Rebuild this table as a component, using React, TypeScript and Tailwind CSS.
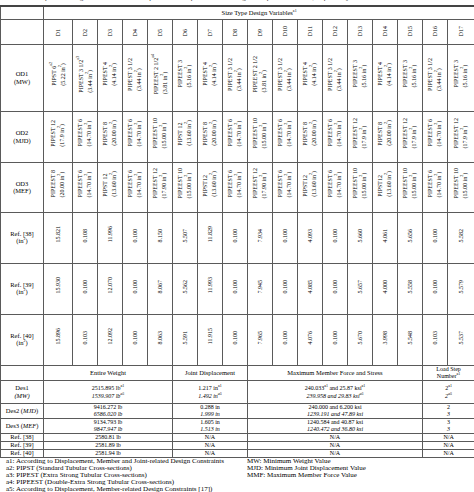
import React from "react"

type Pipe = [string, string, string]

const od1: Pipe[] = [
  ["PIPST 6", "a2", "5.22"], ["PIPEST 3 1/2", "a3", "3.44"], ["PIPEST 4", "", "4.14"], ["PIPEST 3 1/2", "", "3.44"],
  ["PIPEEST 2 1/2", "a4", "3.81"], ["PIPEEST 3", "", "5.16"], ["PIPEST 4", "", "4.14"], ["PIPEST 3 1/2", "", "3.44"],
  ["PIPEEST 2 1/2", "", "3.81"], ["PIPEST 3 1/2", "", "3.44"], ["PIPEST 4", "", "4.14"], ["PIPEST 3 1/2", "", "3.44"],
  ["PIPEEST 3", "", "5.16"], ["PIPEST 4", "", "4.14"], ["PIPEEST 3", "", "5.16"], ["PIPEST 3 1/2", "", "3.44"],
  ["PIPEEST 3", "", "5.16"],
]

const od2: Pipe[] = [
  ["PIPEST 12", "", "17.9"], ["PIPEEST 6", "", "14.70"], ["PIPEST 8", "", "20.00"], ["PIPEEST 6", "", "14.70"],
  ["PIPEEST 10", "", "15.00"], ["PIPST 12", "", "13.60"], ["PIPEST 8", "", "20.00"], ["PIPEEST 6", "", "14.70"],
  ["PIPEEST 10", "", "15.00"], ["PIPEEST 6", "", "14.70"], ["PIPEST 8", "", "20.00"], ["PIPEEST 6", "", "14.70"],
  ["PIPEEST 12", "", "17.9"], ["PIPEST 8", "", "20.00"], ["PIPEEST 12", "", "17.9"], ["PIPEEST 6", "", "14.70"],
  ["PIPEEST 12", "", "17.9"],
]

const od3: Pipe[] = [
  ["PIPEEST 8", "", "20.00"], ["PIPEEST 6", "", "14.70"], ["PIPST 12", "", "13.60"], ["PIPEEST 6", "", "14.70"],
  ["PIPEEST 12", "", "17.90"], ["PIPEEST 10", "", "15.00"], ["PIPST12", "", "13.60"], ["PIPEEST 6", "", "14.70"],
  ["PIPEEST 12", "", "17.90"], ["PIPEEST 6", "", "14.70"], ["PIPST12", "", "13.60"], ["PIPEEST 6", "", "14.70"],
  ["PIPEEST 10", "", "15.00"], ["PIPST12", "", "13.60"], ["PIPEEST 10", "", "15.00"], ["PIPEEST 6", "", "14.70"],
  ["PIPEEST 10", "", "15.00"],
]

const refs: [string, string[]][] = [
  ["38", ["15.821", "0.108", "11.996", "0.100", "8.150", "5.507", "11.829", "0.100", "7.934", "0.100", "4.093", "0.100", "5.660", "4.061", "5.656", "0.100", "5.582"]],
  ["39", ["15.930", "0.100", "12.070", "0.100", "8.067", "5.562", "11.993", "0.100", "7.945", "0.100", "4.085", "0.100", "5.657", "4.000", "5.558", "0.100", "5.579"]],
  ["40", ["15.896", "0.103", "12.092", "0.100", "8.063", "5.591", "11.915", "0.100", "7.965", "0.100", "4.076", "0.100", "5.670", "3.998", "5.548", "0.103", "5.537"]],
]

const cell = "border border-[#5a5a5a] p-0 text-center align-middle"
const sup = "static align-super text-[4px] leading-none"

function PipeCell({ p }: { p: Pipe }) {
  return (
    <td className={cell}>
      <div className="inline-block rotate-180 whitespace-nowrap text-left text-[6px] leading-[7px] [writing-mode:vertical-rl]">
        {p[0]}
        {p[1] && <sup className={sup}>{p[1]}</sup>}
        <br />({p[2]} in<sup className={sup}>2</sup>)
      </div>
    </td>
  )
}

function Label({ a, b }: { a: string; b: React.ReactNode }) {
  return (
    <td className={cell + " text-[6.5px] leading-[7.5px]"}>
      {a}
      <br />
      {b}
    </td>
  )
}

export default function App() {
  return (
    <div className="w-[474px] bg-white text-black font-['Liberation_Serif',serif]">
      {/* caption, cut off at top */}
      <div className="h-[5px] overflow-hidden">
        <p className="-mt-[7px] whitespace-nowrap pl-[40px] text-[7px] leading-[10px] text-[#333]">
          Optimum design results of the 72-bar space truss compared with results given in previous studies, respectively.
        </p>
      </div>

      <table className="w-[474px] table-fixed border-collapse">
        <colgroup>
          <col className="w-[43px]" />
          <col className="w-[29px]" />
          {Array.from({ length: 15 }).map((_, i) => (
            <col key={i} className="w-[25px]" />
          ))}
          <col className="w-[27px]" />
        </colgroup>
        <tbody>
          <tr className="h-[13px]">
            <td className={cell + " border-t-2 border-t-[#444]"} />
            <td colSpan={17} className={cell + " border-t-2 border-t-[#444] text-[6.5px] leading-none"}>
              Size Type Design Variables<sup className={sup}>a1</sup>
            </td>
          </tr>
          <tr className="h-[25px]">
            <td className={cell} />
            {Array.from({ length: 17 }).map((_, i) => (
              <td key={i} className={cell}>
                <div className="inline-block rotate-180 whitespace-nowrap text-[6px] leading-[7px] [writing-mode:vertical-rl]">
                  D{i + 1}
                </div>
              </td>
            ))}
          </tr>
          <tr className="h-[67px]">
            <Label a="OD1" b="(MW)" />
            {od1.map((p, i) => <PipeCell key={i} p={p} />)}
          </tr>
          <tr className="h-[51px]">
            <Label a="OD2" b="(MJD)" />
            {od2.map((p, i) => <PipeCell key={i} p={p} />)}
          </tr>
          <tr className="h-[50px]">
            <Label a="OD3" b="(MEF)" />
            {od3.map((p, i) => <PipeCell key={i} p={p} />)}
          </tr>
          {refs.map(([r, vals]) => (
            <tr key={r} className="h-[51px]">
              <Label a={`Ref. [${r}]`} b={<>(in<sup className={sup}>2</sup>)</>} />
              {vals.map((v, i) => (
                <td key={i} className={cell}>
                  <div className="inline-block rotate-180 whitespace-nowrap text-[6px] leading-[7px] [writing-mode:vertical-rl]">
                    {v}
                  </div>
                </td>
              ))}
            </tr>
          ))}

          {/* results block */}
          <tr className="h-[15px] text-[6.5px] leading-[7px]">
            <td className={cell} />
            <td colSpan={5} className={cell}>Entire Weight</td>
            <td colSpan={3} className={cell}>Joint Displacement</td>
            <td colSpan={7} className={cell}>Maximum Member Force and Stress</td>
            <td colSpan={2} className={cell + " text-[6px] leading-[6.5px]"}>
              Load Step
              <br />
              Number<sup className={sup}>a1</sup>
            </td>
          </tr>
          <tr className="h-[23px] text-[6px] leading-[7px]">
            <td className={cell + " text-[6.5px] leading-[7.5px]"}>
              Des1
              <br />
              <i>(MW)</i>
            </td>
            <td colSpan={5} className={cell}>
              2515.895 lb<sup className={sup}>a1</sup>
              <br />
              <i>1539.907 lb<sup className={sup}>a5</sup></i>
            </td>
            <td colSpan={3} className={cell}>
              1.217 in<sup className={sup}>a1</sup>
              <br />
              <i>1.492 in<sup className={sup}>a5</sup></i>
            </td>
            <td colSpan={7} className={cell}>
              240.033<sup className={sup}>a1</sup> and 25.87 ksi<sup className={sup}>a1</sup>
              <br />
              <i>239.958 and 29.83 ksi<sup className={sup}>a5</sup></i>
            </td>
            <td colSpan={2} className={cell}>
              2<sup className={sup}>a1</sup>
              <br />
              <i>2<sup className={sup}>a5</sup></i>
            </td>
          </tr>
          <tr className="h-[15px] text-[6px] leading-[7px]">
            <td className={cell + " text-[6.5px]"}>
              Des2 (<i>MJD</i>)
            </td>
            <td colSpan={5} className={cell}>
              9416.272 lb
              <br />
              <i>6586.020 lb</i>
            </td>
            <td colSpan={3} className={cell}>
              0.288 in
              <br />
              <i>1.999 in</i>
            </td>
            <td colSpan={7} className={cell}>
              240.000 and 6.200 ksi
              <br />
              <i>1239.191 and 47.89 ksi</i>
            </td>
            <td colSpan={2} className={cell}>
              2
              <br />
              <i>3</i>
            </td>
          </tr>
          <tr className="h-[14px] text-[6px] leading-[7px]">
            <td className={cell + " text-[6.5px]"}>
              Des3 (<i>MEF</i>)
            </td>
            <td colSpan={5} className={cell}>
              9134.793 lb
              <br />
              <i>9847.947 lb</i>
            </td>
            <td colSpan={3} className={cell}>
              1.605 in
              <br />
              <i>1.513 in</i>
            </td>
            <td colSpan={7} className={cell}>
              1240.584 and 40.87 ksi
              <br />
              <i>1240.472 and 36.80 ksi</i>
            </td>
            <td colSpan={2} className={cell}>
              3
              <br />
              <i>3</i>
            </td>
          </tr>
          {[
            ["38", "2580.81 lb"],
            ["39", "2581.89 lb"],
            ["40", "2581.94 lb"],
          ].map(([r, w]) => (
            <tr key={r} className="h-[8px] text-[6px] leading-[6px]">
              <td className={cell + " text-[6.5px]"}>Ref. [{r}]</td>
              <td colSpan={5} className={cell}>{w}</td>
              <td colSpan={3} className={cell}>N/A</td>
              <td colSpan={7} className={cell}>N/A</td>
              <td colSpan={2} className={cell}>N/A</td>
            </tr>
          ))}
        </tbody>
      </table>

      {/* footnotes */}
      <div className="flex text-[7px] leading-[7px]">
        <div className="w-[247px] pl-[6px]">
          <p>a1: According to Displacement, Member and Joint-related Design Constraints</p>
          <p>a2: PIPST (Standard Tubular Cross-sections)</p>
          <p>a3: PIPEST (Extra Strong Tubular Cross-sections)</p>
          <p>a4: PIPEEST (Double-Extra Strong Tubular Cross-sections)</p>
          <p>a5: According to Displacement, Member-related Design Constraints [17])</p>
        </div>
        <div>
          <p>MW: Minimum Weight Value</p>
          <p>MJD: Minimum Joint Displacement Value</p>
          <p>MMF: Maximum Member Force Value</p>
        </div>
      </div>
    </div>
  )
}
